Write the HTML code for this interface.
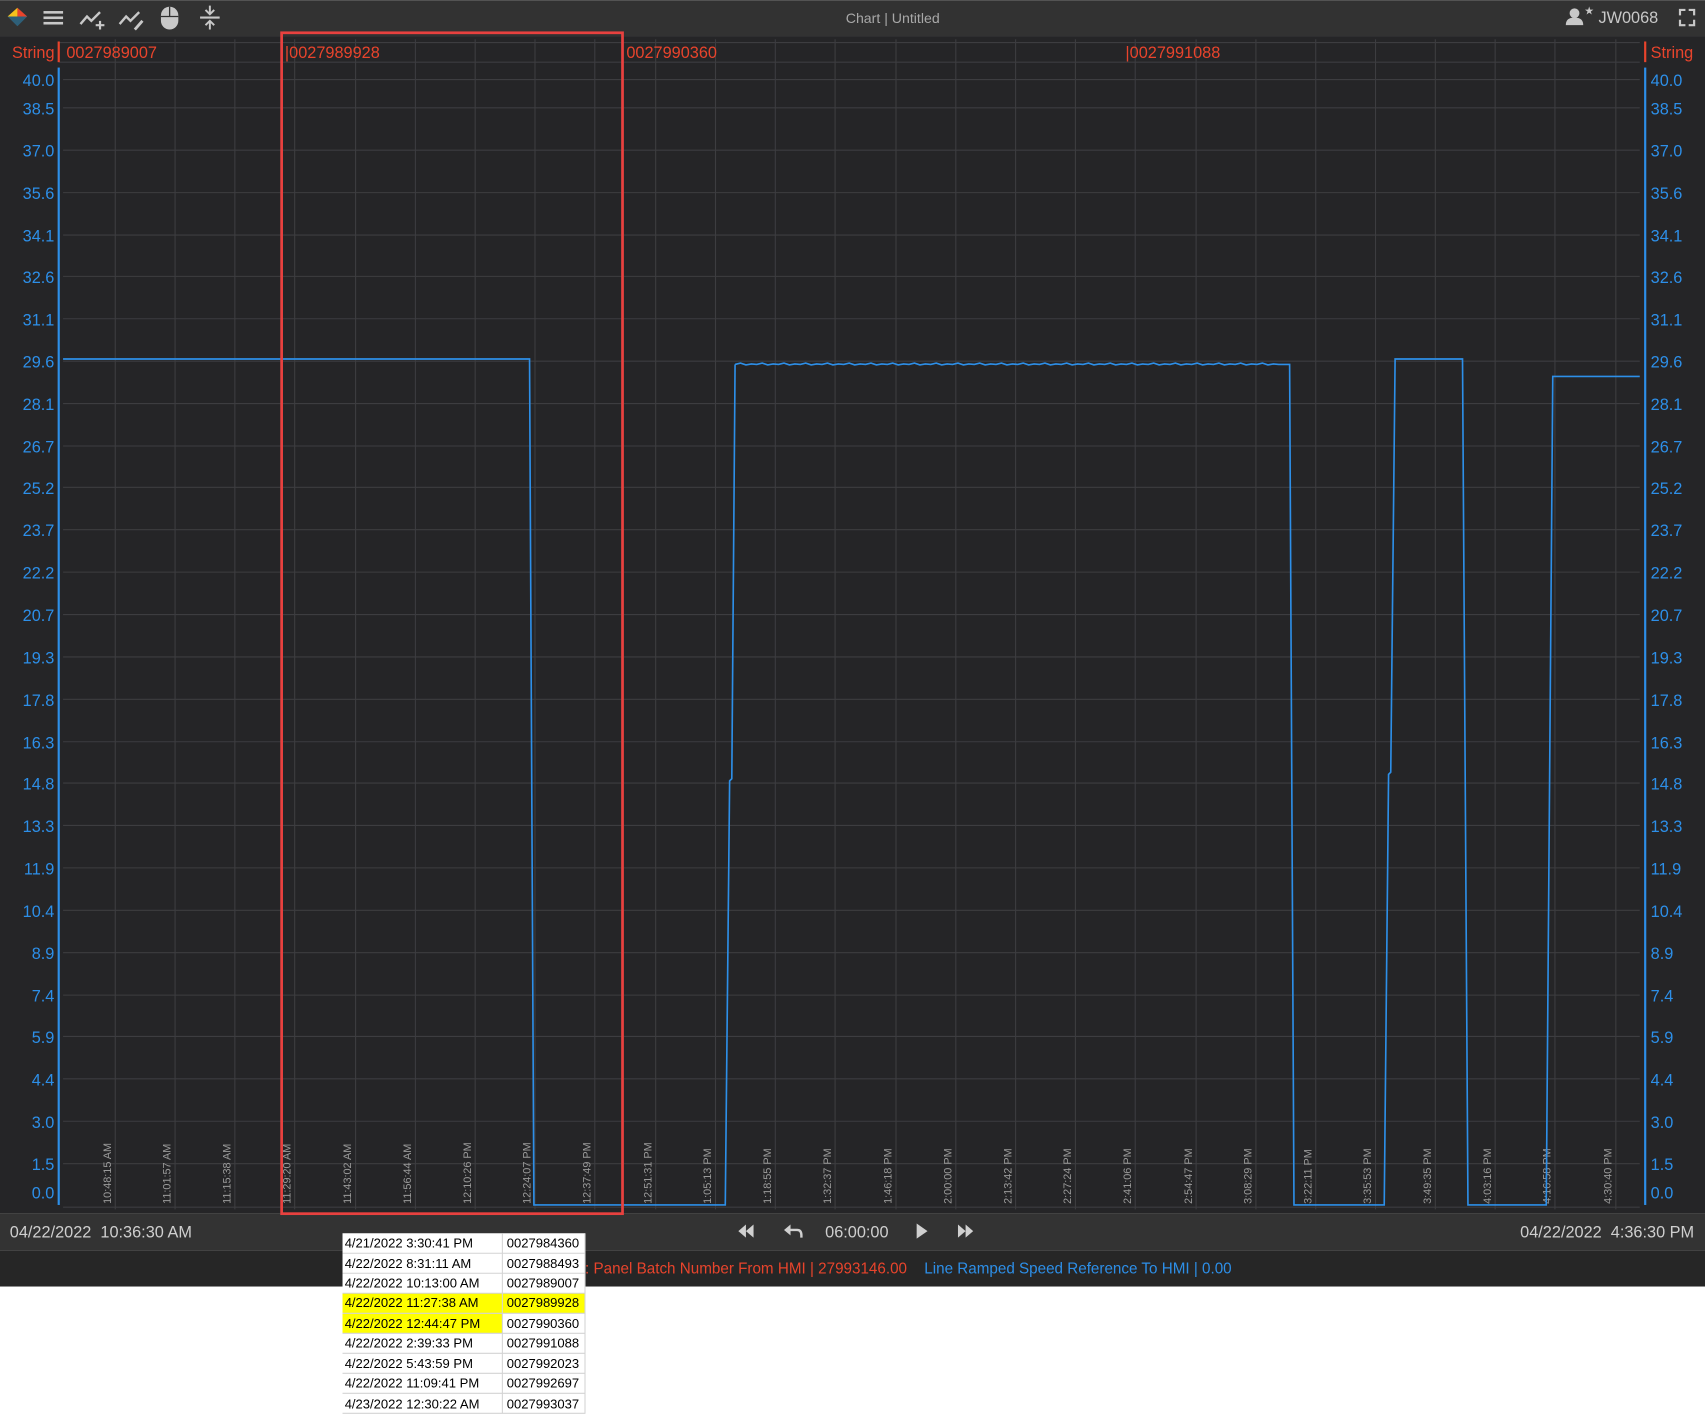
<!DOCTYPE html>
<html><head><meta charset="utf-8"><style>
html,body{margin:0;padding:0;background:#fff;width:1705px;height:1415px;overflow:hidden}
svg{display:block}
text{font-family:"Liberation Sans",sans-serif}
</style></head><body>
<svg width="1705" height="1415" viewBox="0 0 1568 1301" xmlns="http://www.w3.org/2000/svg">
<rect x="0" y="0" width="1568" height="1301" fill="#fff"/>
<rect x="0" y="0" width="1568" height="33" fill="#323232"/>
<rect x="0" y="33" width="1568" height="1083" fill="#252527"/>
<rect x="0" y="1116" width="1568" height="34" fill="#333333"/>
<rect x="0" y="1150" width="1568" height="33" fill="#262626"/>
<!-- top icons -->
<g>
<path d="M16 7 L25 15 L16 15 Z" fill="#e8442c"/><path d="M16 7 L16 15 L7 15 Z" fill="#f5c21c"/>
<path d="M7 15 L25 15 L16 24 Z" fill="#2e5f78"/>
<rect x="40" y="10" width="18" height="2.4" fill="#c8c8c8"/><rect x="40" y="15" width="18" height="2.4" fill="#c8c8c8"/><rect x="40" y="20" width="18" height="2.4" fill="#c8c8c8"/>
<path d="M74 22 L80 15 L84 19 L92 11" stroke="#c8c8c8" stroke-width="2.2" fill="none"/>
<path d="M92 19 v8 M88 23 h8" stroke="#c8c8c8" stroke-width="2"/>
<path d="M110 22 L116 15 L120 19 L128 11" stroke="#c8c8c8" stroke-width="2.2" fill="none"/>
<path d="M124 27 L131 19" stroke="#c8c8c8" stroke-width="2.6"/>
<rect x="148" y="6" width="16" height="21" rx="8" fill="#c8c8c8"/><path d="M148 15 h16 M156 6 v9" stroke="#323232" stroke-width="1.2"/>
<path d="M184 16 h18" stroke="#c8c8c8" stroke-width="2"/>
<path d="M193 5 v7 M189 9 l4 4 l4 -4 M193 27 v-7 M189 23 l4 -4 l4 4" stroke="#c8c8c8" stroke-width="1.8" fill="none"/>
</g>
<text x="821" y="21" font-size="13" fill="#a8a8a8" text-anchor="middle">Chart | Untitled</text>
<circle cx="1448" cy="12" r="4.5" fill="#c8c8c8"/><path d="M1440 23 q0 -7 8 -7 q8 0 8 7 z" fill="#c8c8c8"/>
<text x="1457" y="13" font-size="10" fill="#c8c8c8">★</text>
<text x="1470" y="21" font-size="15" fill="#c8c8c8">JW0068</text>
<path d="M1545 14 v-5 h5 M1553 9 h5 v5 M1558 18 v5 h-5 M1550 23 h-5 v-5" stroke="#c8c8c8" stroke-width="2" fill="none"/>
<!-- grid -->
<g stroke="#3d3d40" stroke-width="1">
<path d="M54 39 H1508 M54 57 H1508"/>
<path d="M58 73H1508M58 99H1508M58 138H1508M58 177H1508M58 216H1508M58 254H1508M58 293H1508M58 332H1508M58 371H1508M58 410H1508M58 448H1508M58 487H1508M58 526H1508M58 565H1508M58 604H1508M58 643H1508M58 682H1508M58 720H1508M58 759H1508M58 798H1508M58 837H1508M58 876H1508M58 915H1508M58 953H1508M58 992H1508M58 1031H1508M58 1070H1508M58 1110H1508"/>
<path d="M106 36V1112M161 36V1112M216 36V1112M271 36V1112M327 36V1112M382 36V1112M437 36V1112M492 36V1112M547 36V1112M603 36V1112M658 36V1112M713 36V1112M768 36V1112M824 36V1112M879 36V1112M934 36V1112M989 36V1112M1044 36V1112M1100 36V1112M1155 36V1112M1210 36V1112M1265 36V1112M1320 36V1112M1375 36V1112M1430 36V1112M1486 36V1112"/>
</g>
<!-- axes -->
<rect x="53" y="38" width="2" height="19" fill="#e8442c"/>
<rect x="53" y="62" width="2" height="1046" fill="#2d8fe8"/>
<rect x="1512" y="38" width="2" height="19" fill="#e8442c"/>
<rect x="1512" y="62" width="2" height="1046" fill="#2d8fe8"/>
<g font-size="15" fill="#e8442c">
<text x="11" y="53">String</text><text x="1518" y="53">String</text>
<text x="61" y="53">0027989007</text><text x="262" y="53">|0027989928</text>
<text x="576" y="53">0027990360</text><text x="1035" y="53">|0027991088</text>
</g>
<g font-size="15" fill="#2d8fe8" text-anchor="end">
<text x="50" y="79">40.0</text><text x="50" y="105">38.5</text><text x="50" y="144">37.0</text><text x="50" y="183">35.6</text><text x="50" y="222">34.1</text><text x="50" y="260">32.6</text><text x="50" y="299">31.1</text><text x="50" y="338">29.6</text><text x="50" y="377">28.1</text><text x="50" y="416">26.7</text><text x="50" y="454">25.2</text><text x="50" y="493">23.7</text><text x="50" y="532">22.2</text><text x="50" y="571">20.7</text><text x="50" y="610">19.3</text><text x="50" y="649">17.8</text><text x="50" y="688">16.3</text><text x="50" y="726">14.8</text><text x="50" y="765">13.3</text><text x="50" y="804">11.9</text><text x="50" y="843">10.4</text><text x="50" y="882">8.9</text><text x="50" y="921">7.4</text><text x="50" y="959">5.9</text><text x="50" y="998">4.4</text><text x="50" y="1037">3.0</text><text x="50" y="1076">1.5</text><text x="50" y="1102">0.0</text>
</g>
<g font-size="15" fill="#2d8fe8">
<text x="1518" y="79">40.0</text><text x="1518" y="105">38.5</text><text x="1518" y="144">37.0</text><text x="1518" y="183">35.6</text><text x="1518" y="222">34.1</text><text x="1518" y="260">32.6</text><text x="1518" y="299">31.1</text><text x="1518" y="338">29.6</text><text x="1518" y="377">28.1</text><text x="1518" y="416">26.7</text><text x="1518" y="454">25.2</text><text x="1518" y="493">23.7</text><text x="1518" y="532">22.2</text><text x="1518" y="571">20.7</text><text x="1518" y="610">19.3</text><text x="1518" y="649">17.8</text><text x="1518" y="688">16.3</text><text x="1518" y="726">14.8</text><text x="1518" y="765">13.3</text><text x="1518" y="804">11.9</text><text x="1518" y="843">10.4</text><text x="1518" y="882">8.9</text><text x="1518" y="921">7.4</text><text x="1518" y="959">5.9</text><text x="1518" y="998">4.4</text><text x="1518" y="1037">3.0</text><text x="1518" y="1076">1.5</text><text x="1518" y="1102">0.0</text>
</g>
<!-- time labels -->
<g font-size="10" fill="#9a9a9a">
<text transform="translate(102,1107) rotate(-90)">10:48:15 AM</text>
<text transform="translate(157,1107) rotate(-90)">11:01:57 AM</text>
<text transform="translate(212,1107) rotate(-90)">11:15:38 AM</text>
<text transform="translate(267,1107) rotate(-90)">11:29:20 AM</text>
<text transform="translate(323,1107) rotate(-90)">11:43:02 AM</text>
<text transform="translate(378,1107) rotate(-90)">11:56:44 AM</text>
<text transform="translate(433,1107) rotate(-90)">12:10:26 PM</text>
<text transform="translate(488,1107) rotate(-90)">12:24:07 PM</text>
<text transform="translate(543,1107) rotate(-90)">12:37:49 PM</text>
<text transform="translate(599,1107) rotate(-90)">12:51:31 PM</text>
<text transform="translate(654,1107) rotate(-90)">1:05:13 PM</text>
<text transform="translate(709,1107) rotate(-90)">1:18:55 PM</text>
<text transform="translate(764,1107) rotate(-90)">1:32:37 PM</text>
<text transform="translate(820,1107) rotate(-90)">1:46:18 PM</text>
<text transform="translate(875,1107) rotate(-90)">2:00:00 PM</text>
<text transform="translate(930,1107) rotate(-90)">2:13:42 PM</text>
<text transform="translate(985,1107) rotate(-90)">2:27:24 PM</text>
<text transform="translate(1040,1107) rotate(-90)">2:41:06 PM</text>
<text transform="translate(1096,1107) rotate(-90)">2:54:47 PM</text>
<text transform="translate(1151,1107) rotate(-90)">3:08:29 PM</text>
<text transform="translate(1206,1107) rotate(-90)">3:22:11 PM</text>
<text transform="translate(1261,1107) rotate(-90)">3:35:53 PM</text>
<text transform="translate(1316,1107) rotate(-90)">3:49:35 PM</text>
<text transform="translate(1371,1107) rotate(-90)">4:03:16 PM</text>
<text transform="translate(1426,1107) rotate(-90)">4:16:58 PM</text>
<text transform="translate(1482,1107) rotate(-90)">4:30:40 PM</text>
</g>
<!-- trace -->
<g stroke="#2d8fe8" stroke-width="1.5" fill="none">
<path d="M58 330 H487 L491 1108 H667 L671 718 L673 716 L676 335"/>
<path d="M676 335 l5 -1.2 l5 1.6 l5 -0.8 l5 0.4 l5 -1.2 l5 1.6 l5 -0.8 l5 0.4 l5 -1.2 l5 1.6 l5 -0.8 l5 0.4 l5 -1.2 l5 1.6 l5 -0.8 l5 0.4 l5 -1.2 l5 1.6 l5 -0.8 l5 0.4 l5 -1.2 l5 1.6 l5 -0.8 l5 0.4 l5 -1.2 l5 1.6 l5 -0.8 l5 0.4 l5 -1.2 l5 1.6 l5 -0.8 l5 0.4 l5 -1.2 l5 1.6 l5 -0.8 l5 0.4 l5 -1.2 l5 1.6 l5 -0.8 l5 0.4 l5 -1.2 l5 1.6 l5 -0.8 l5 0.4 l5 -1.2 l5 1.6 l5 -0.8 l5 0.4 l5 -1.2 l5 1.6 l5 -0.8 l5 0.4 l5 -1.2 l5 1.6 l5 -0.8 l5 0.4 l5 -1.2 l5 1.6 l5 -0.8 l5 0.4 l5 -1.2 l5 1.6 l5 -0.8 l5 0.4 l5 -1.2 l5 1.6 l5 -0.8 l5 0.4 l5 -1.2 l5 1.6 l5 -0.8 l5 0.4 l5 -1.2 l5 1.6 l5 -0.8 l5 0.4 l5 -1.2 l5 1.6 l5 -0.8 l5 0.4 l5 -1.2 l5 1.6 l5 -0.8 l5 0.4 l5 -1.2 l5 1.6 l5 -0.8 l5 0.4 l5 -1.2 l5 1.6 l5 -0.8 l5 0.4 l5 -1.2 l5 1.6 l5 -0.8 l5 0.4 l5 -1.2 l5 1.6 l5 -0.8 l5 0.4 L1186 335 L1190 1108 H1273 L1277 712 L1279 710 L1283 330 H1345 L1350 1108 H1422 L1428 346 H1508"/>
</g>
<!-- red rect -->
<rect x="259" y="30" width="313.5" height="1086" fill="none" stroke="#e8413f" stroke-width="2.5"/>
<!-- bottom bar -->
<text x="9" y="1138" font-size="15" fill="#cfcfcf" xml:space="preserve">04/22/2022  10:36:30 AM</text>
<text x="1558" y="1138" font-size="15" fill="#cfcfcf" text-anchor="end" xml:space="preserve">04/22/2022  4:36:30 PM</text>
<g fill="#d0d0d0">
<path d="M686 1126 l-7 6 l7 6z M693 1126 l-7 6 l7 6z"/>
<path d="M721 1131 l6 -5 v10z"/><path d="M725 1131 h8 q4 0 4 5 v2" stroke="#d0d0d0" stroke-width="2.2" fill="none"/>
<path d="M843 1125 l10 7 l-10 7z"/>
<path d="M881 1126 l7 6 l-7 6z M888 1126 l7 6 l-7 6z"/>
</g>
<text x="788" y="1138" font-size="15" fill="#cfcfcf" text-anchor="middle">06:00:00</text>
<text x="538" y="1171" font-size="14" fill="#e8442c">: Panel Batch Number From HMI | 27993146.00</text>
<text x="850" y="1171" font-size="14" fill="#2d8fe8">Line Ramped Speed Reference To HMI | 0.00</text>
<!-- table -->
<g>
<rect x="315" y="1134" width="223" height="166" fill="#fff"/>
<rect x="315" y="1189" width="223" height="18.4" fill="#ffff00"/>
<rect x="315" y="1207.4" width="147" height="18.4" fill="#ffff00"/>
<g stroke="#d4d4d4" stroke-width="1">
<path d="M315 1152.4H538M315 1170.8H538M315 1189.2H538M315 1207.6H538M315 1226H538M315 1244.4H538M315 1262.8H538M315 1281.2H538M315 1299.6H538M462 1134V1300M538 1134V1300"/>
</g>
<g font-size="12" fill="#000">
<text x="317" y="1147">4/21/2022 3:30:41 PM</text><text x="466" y="1147">0027984360</text>
<text x="317" y="1166">4/22/2022 8:31:11 AM</text><text x="466" y="1166">0027988493</text>
<text x="317" y="1184">4/22/2022 10:13:00 AM</text><text x="466" y="1184">0027989007</text>
<text x="317" y="1202">4/22/2022 11:27:38 AM</text><text x="466" y="1202">0027989928</text>
<text x="317" y="1221">4/22/2022 12:44:47 PM</text><text x="466" y="1221">0027990360</text>
<text x="317" y="1239">4/22/2022 2:39:33 PM</text><text x="466" y="1239">0027991088</text>
<text x="317" y="1258">4/22/2022 5:43:59 PM</text><text x="466" y="1258">0027992023</text>
<text x="317" y="1276">4/22/2022 11:09:41 PM</text><text x="466" y="1276">0027992697</text>
<text x="317" y="1295">4/23/2022 12:30:22 AM</text><text x="466" y="1295">0027993037</text>
</g>
</g>
</svg>
</body></html>
